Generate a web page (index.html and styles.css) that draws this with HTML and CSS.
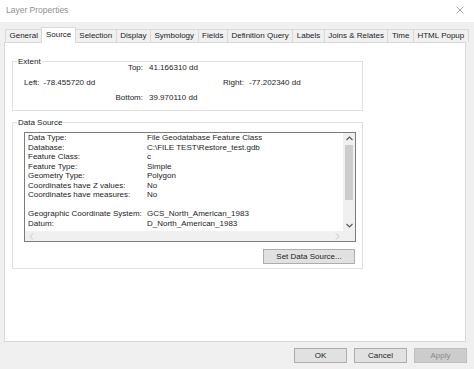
FILE: index.html
```html
<!DOCTYPE html>
<html lang="en">
<head>
    <meta charset="UTF-8">
    <meta name="viewport" content="width=device-width, initial-scale=1.0">
    <title>Layer Properties</title>
    <link rel="stylesheet" href="styles.css">
</head>
<body>

<div class="dialog">
    <div class="titlebar">
        <span class="title">Layer Properties</span>
        <svg class="close" width="8" height="8" viewBox="0 0 8 8">
            <path d="M0.5 0.5 L7.5 7.5 M7.5 0.5 L0.5 7.5" stroke="#9a9a9a" stroke-width="0.9" fill="none"/>
        </svg>
    </div>

    <div class="tabs">
        <div class="tab">General</div>
        <div class="tab active">Source</div>
        <div class="tab">Selection</div>
        <div class="tab">Display</div>
        <div class="tab">Symbology</div>
        <div class="tab">Fields</div>
        <div class="tab">Definition Query</div>
        <div class="tab">Labels</div>
        <div class="tab">Joins &amp; Relates</div>
        <div class="tab">Time</div>
        <div class="tab">HTML Popup</div>
    </div>

    <div class="panel">
        <div class="group extent">
            <span class="group-title">Extent</span>
            <div class="extent-grid">
                <span class="ext-right">Top:</span>
                <span class="ext-val">41.166310 dd</span>
                <span></span>
                <span></span>

                <span class="ext-left"><span>Left:</span><span>-78.455720 dd</span></span>
                <span></span>
                <span>Right:</span>
                <span>-77.202340 dd</span>

                <span class="ext-right">Bottom:</span>
                <span class="ext-val">39.970110 dd</span>
                <span></span>
                <span></span>
            </div>
        </div>

        <div class="group source">
            <span class="group-title">Data Source</span>
            <div class="listbox">
                <div class="list-main">
                    <div class="list-text">
                        <span>Data Type:</span><span>File Geodatabase Feature Class</span>
                        <span>Database:</span><span>C:\FILE TEST\Restore_test.gdb</span>
                        <span>Feature Class:</span><span>c</span>
                        <span>Feature Type:</span><span>Simple</span>
                        <span>Geometry Type:</span><span>Polygon</span>
                        <span>Coordinates have Z values:</span><span>No</span>
                        <span>Coordinates have measures:</span><span>No</span>
                        <span>&nbsp;</span><span></span>
                        <span>Geographic Coordinate System:</span><span>GCS_North_American_1983</span>
                        <span>Datum:</span><span>D_North_American_1983</span>
                    </div>
                    <div class="vscroll">
                        <div class="arrow">
                            <svg width="7" height="5" viewBox="0 0 7 5"><path d="M0.5 4 L3.5 1 L6.5 4" stroke="#555" stroke-width="1.1" fill="none"/></svg>
                        </div>
                        <div class="thumb"></div>
                        <div class="track"></div>
                        <div class="arrow">
                            <svg width="7" height="5" viewBox="0 0 7 5"><path d="M0.5 1 L3.5 4 L6.5 1" stroke="#555" stroke-width="1.1" fill="none"/></svg>
                        </div>
                    </div>
                </div>
                <div class="hscroll">
                    <div class="arrow">
                        <svg width="5" height="7" viewBox="0 0 5 7"><path d="M4 0.5 L1 3.5 L4 6.5" stroke="#c4c4c4" stroke-width="1" fill="none"/></svg>
                    </div>
                    <div class="track"></div>
                    <div class="arrow">
                        <svg width="5" height="7" viewBox="0 0 5 7"><path d="M1 0.5 L4 3.5 L1 6.5" stroke="#c4c4c4" stroke-width="1" fill="none"/></svg>
                    </div>
                    <div class="corner"></div>
                </div>
            </div>
            <div class="source-actions">
                <button class="btn set-source">Set Data Source...</button>
            </div>
        </div>
    </div>

    <div class="footer">
        <button class="btn">OK</button>
        <button class="btn">Cancel</button>
        <button class="btn" disabled>Apply</button>
    </div>
</div>

</body>
</html>
```

FILE: styles.css
```css
body {
    margin: 0;
    font-family: "Liberation Sans", Arial, sans-serif;
    font-size: 8px;
    color: #1c1c1c;
}
.dialog {
    width: 474px;
    height: 369px;
    background: #f0f0f0;
    overflow: hidden;
}
.titlebar {
    height: 22px;
    background: #fff;
    display: flex;
    align-items: center;
    justify-content: space-between;
    padding: 0 10px 2px 6px;
    box-sizing: border-box;
}
.title {
    font-size: 8.5px;
    color: #8f8f8f;
}

/* tab strip */
.tabs {
    display: flex;
    align-items: flex-end;
    height: 15px;
    margin-top: 5px;
    padding-left: 5px;
    position: relative;
    z-index: 1;
}
.tab {
    height: 13px;
    line-height: 12px;
    padding: 0 3.5px;
    border: 1px solid #d9d9d9;
    border-bottom: none;
    margin-right: -1px;
    box-sizing: border-box;
    background: #f0f0f0;
    white-space: nowrap;
}
.tab.active {
    height: 16px;
    line-height: 13px;
    margin-bottom: -1px;
    background: #fff;
    position: relative;
    z-index: 2;
}

/* main page */
.panel {
    margin-left: 4px;
    width: 462px;
    height: 300px;
    box-sizing: border-box;
    border: 1px solid #d9d9d9;
    background: #fff;
    padding: 18px 0 0 7px;
}
.group {
    position: relative;
    width: 351px;
    box-sizing: border-box;
    border: 1px solid #e0e0e0;
}
.group-title {
    position: absolute;
    top: -6px;
    left: 4px;
    padding: 0 1px;
    line-height: 11px;
    background: #fff;
}
.extent {
    padding: 0 0 6px 11px;
}
.extent-grid {
    display: grid;
    grid-template-columns: 119px 80px 26px auto;
    grid-auto-rows: 12px;
    row-gap: 3px;
    line-height: 12px;
    white-space: nowrap;
}
.ext-right {
    text-align: right;
}
.ext-val {
    padding-left: 6px;
}
.ext-left {
    display: flex;
    gap: 4px;
}

.source {
    margin-top: 11px;
    padding: 9px 6px 4px 11px;
}
.listbox {
    height: 110px;
    box-sizing: border-box;
    border: 1px solid #7c7c7c;
    display: flex;
    flex-direction: column;
}
.list-main {
    flex: 1;
    display: flex;
}
.list-text {
    flex: 1;
    padding-left: 3px;
    display: grid;
    grid-template-columns: 119px auto;
    grid-auto-rows: 9.5px;
    line-height: 9.5px;
    white-space: nowrap;
    overflow: hidden;
}
.vscroll {
    width: 12px;
    background: #f0f0f0;
    display: flex;
    flex-direction: column;
}
.arrow {
    height: 11px;
    display: flex;
    align-items: center;
    justify-content: center;
}
.thumb {
    height: 55px;
    margin: 1px 2px 0;
    background: #cdcdcd;
}
.track {
    flex: 1;
}
.hscroll {
    height: 10px;
    background: #f0f0f0;
    display: flex;
}
.hscroll .arrow {
    width: 12px;
    height: 10px;
}
.corner {
    width: 12px;
}
.source-actions {
    display: flex;
    justify-content: flex-end;
    margin-top: 7px;
    padding-right: 1px;
}

/* buttons */
.btn {
    font-family: inherit;
    font-size: 8px;
    color: #1c1c1c;
    background: #e1e1e1;
    border: 1px solid #adadad;
    height: 15px;
    padding: 0;
    width: 53px;
}
.btn.set-source {
    width: 92px;
}
.btn:disabled {
    background: #cccccc;
    border-color: #bfbfbf;
    color: #8a8a8a;
}
.footer {
    display: flex;
    justify-content: flex-end;
    gap: 7px;
    margin-top: 6px;
    padding-right: 7px;
}
```
